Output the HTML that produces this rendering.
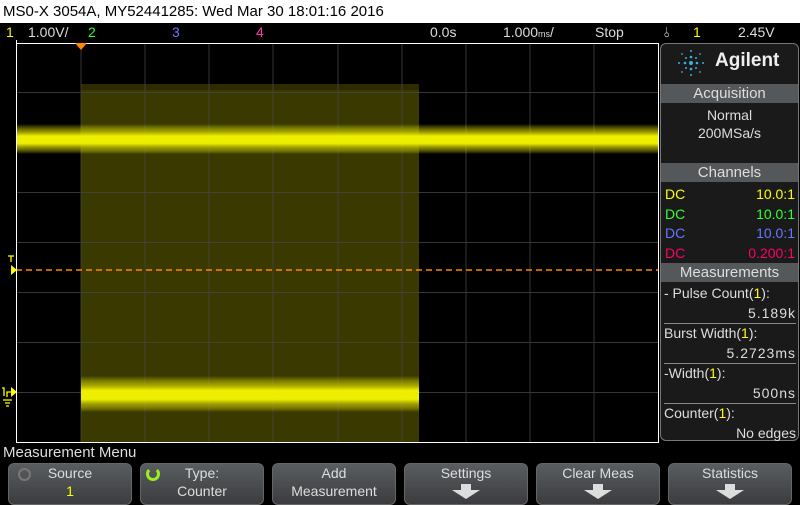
<!DOCTYPE html><html><head><style>
*{margin:0;padding:0;box-sizing:border-box}
body{width:800px;height:503px;background:#000;overflow:hidden;position:relative;font-family:"Liberation Sans Narrow","Liberation Sans",sans-serif;color:#ddd}
.a{position:absolute}
.t{font-size:14px;white-space:nowrap}
.btn{position:absolute;top:463px;width:124px;height:42px;border-radius:6px;background:linear-gradient(#5a5d60,#3a3c3e);border:1px solid #666;color:#ddd;text-align:center;font-size:14px;line-height:18px}
.hd{position:absolute;left:661px;width:137px;height:19px;background:#55585a;color:#ddd;text-align:center;font-size:15px;line-height:19px}
.arr{width:0;height:0;margin:1px auto 0;border-left:14px solid transparent;border-right:14px solid transparent;border-top:9px solid #ddd;position:relative}
.arr:before{content:"";position:absolute;left:-5px;top:-15px;width:10px;height:7px;background:#ddd}
</style></head><body>
<div class="a" style="left:0;top:0;width:800px;height:23px;background:#fff"></div>
<div class="a t" style="left:3px;top:3px;color:#000;font-size:15px">MS0-X 3054A, MY52441285: Wed Mar 30 18:01:16 2016</div>
<div class="a t" style="left:6px;top:24px;color:#ff0">1</div>
<div class="a t" style="left:28px;top:24px">1.00V/</div>
<div class="a t" style="left:88px;top:24px;color:#3f3">2</div>
<div class="a t" style="left:172px;top:24px;color:#67f">3</div>
<div class="a t" style="left:256px;top:24px;color:#f3a">4</div>
<div class="a t" style="left:430px;top:24px">0.0s</div>
<div class="a t" style="left:503px;top:24px">1.000<span style="font-size:9px">ms</span>/</div>
<div class="a t" style="left:595px;top:24px">Stop</div>
<div class="a t" style="left:664px;top:24px">⫰</div>
<div class="a t" style="left:693px;top:24px;color:#ff0">1</div>
<div class="a t" style="left:738px;top:24px">2.45V</div>
<svg class="a" style="left:0;top:40px" width="660" height="405">
<defs>
<linearGradient id="hb" x1="0" y1="0" x2="0" y2="1"><stop offset="0" stop-color="#ff0" stop-opacity="0"/><stop offset=".25" stop-color="#cc0" stop-opacity=".7"/><stop offset=".4" stop-color="#ee0"/><stop offset=".65" stop-color="#ee0"/><stop offset=".8" stop-color="#bb0" stop-opacity=".7"/><stop offset="1" stop-color="#ff0" stop-opacity="0"/></linearGradient>
</defs>
<rect x="81" y="48" width="338" height="354" fill="#3a3a00"/>
<rect x="81" y="44" width="338" height="6" fill="#2c2c00"/>
<g stroke="#444" stroke-width="1" opacity=".8">
<line x1="81" y1="3" x2="81" y2="402"/><line x1="145" y1="3" x2="145" y2="402"/><line x1="209" y1="3" x2="209" y2="402"/><line x1="273" y1="3" x2="273" y2="402"/><line x1="338" y1="3" x2="338" y2="402"/><line x1="402" y1="3" x2="402" y2="402"/><line x1="466" y1="3" x2="466" y2="402"/><line x1="530" y1="3" x2="530" y2="402"/><line x1="594" y1="3" x2="594" y2="402"/>
<line x1="16" y1="52.5" x2="658" y2="52.5"/><line x1="16" y1="102.5" x2="658" y2="102.5"/><line x1="16" y1="152.5" x2="658" y2="152.5"/><line x1="16" y1="202.5" x2="658" y2="202.5"/><line x1="16" y1="252.5" x2="658" y2="252.5"/><line x1="16" y1="302.5" x2="658" y2="302.5"/><line x1="16" y1="352.5" x2="658" y2="352.5"/>
</g>
<rect x="16" y="84" width="642" height="30" fill="url(#hb)"/>
<rect x="81" y="336" width="338" height="36" fill="url(#hb)"/>
<line x1="16" y1="230" x2="658" y2="230" stroke="#f80" stroke-width="1.5" stroke-dasharray="6,4"/>
<line x1="16.5" y1="0" x2="16.5" y2="403" stroke="#fff"/>
<line x1="16" y1="402.5" x2="659" y2="402.5" stroke="#fff"/>
<line x1="16" y1="3.5" x2="659" y2="3.5" stroke="#fff"/>
<line x1="658.5" y1="3" x2="658.5" y2="403" stroke="#fff"/>
<polygon points="75,3 87,3 81,10" fill="#f80"/>
<polygon points="11,225 17,230 11,235" fill="#ff0"/>
<path d="M8 216h6M11 216v6" stroke="#ff0" stroke-width="1.3" fill="none"/>
<polygon points="11,347 17,352 11,357" fill="#ff0"/>
<path d="M2 348h2v8M7 357v-5h4M3 360h9M5 363h5M6 366h3" stroke="#ff0" stroke-width="1.3" fill="none"/>
</svg>
<div class="a" style="left:660px;top:43px;width:139px;height:398px;border:1px solid #777;border-radius:6px;background:#1a1a1a"></div>
<svg class="a" style="left:676px;top:48px" width="30" height="30"><g fill="#3ab0e0">
<circle cx="15" cy="15" r="2"/><circle cx="15" cy="9" r="1.3"/><circle cx="15" cy="21" r="1.3"/><circle cx="9" cy="15" r="1.3"/><circle cx="21" cy="15" r="1.3"/><circle cx="15" cy="3" r="1"/><circle cx="15" cy="27" r="1"/><circle cx="3" cy="15" r="1"/><circle cx="27" cy="15" r="1"/><circle cx="10" cy="10" r="1"/><circle cx="20" cy="10" r="1"/><circle cx="10" cy="20" r="1"/><circle cx="20" cy="20" r="1"/><circle cx="6" cy="6" r=".9"/><circle cx="24" cy="6" r=".9"/><circle cx="6" cy="24" r=".9"/><circle cx="24" cy="24" r=".9"/></g></svg>
<div class="a" style="left:715px;top:50px;font-family:'Liberation Sans',sans-serif;font-weight:bold;font-size:19px;color:#eee">Agilent</div>
<div class="hd" style="top:84px">Acquisition</div>
<div class="a t" style="left:661px;top:106px;width:137px;text-align:center;font-size:14px;line-height:18px">Normal<br>200MSa/s</div>
<div class="hd" style="top:163px">Channels</div>
<div class="a t" style="left:665px;top:185px;line-height:19.5px;font-size:14px"><span style="color:#ff0">DC</span><br><span style="color:#3f3">DC</span><br><span style="color:#67f">DC</span><br><span style="color:#f06">DC</span></div>
<div class="a t" style="left:700px;top:185px;width:95px;text-align:right;line-height:19.5px;font-size:14px"><span style="color:#ff0">10.0:1</span><br><span style="color:#3f3">10.0:1</span><br><span style="color:#67f">10.0:1</span><br><span style="color:#f06">0.200:1</span></div>
<div class="hd" style="top:263px">Measurements</div>
<div class="a" style="left:664px;top:284px;width:132px;font-size:14px;line-height:19.5px">
<div>- Pulse Count(<span style="color:#ff0">1</span>):</div><div style="text-align:right;border-bottom:1px solid #888;letter-spacing:1px">5.189k</div>
<div>Burst Width(<span style="color:#ff0">1</span>):</div><div style="text-align:right;border-bottom:1px solid #888;letter-spacing:1px">5.2723ms</div>
<div>-Width(<span style="color:#ff0">1</span>):</div><div style="text-align:right;border-bottom:1px solid #888;letter-spacing:1px">500ns</div>
<div>Counter(<span style="color:#ff0">1</span>):</div><div style="text-align:right">No edges</div></div>
<div class="a t" style="left:3px;top:444px;font-size:15px">Measurement Menu</div>
<div class="btn" style="left:8px">Source<br><span style="color:#ff0">1</span><span class="a" style="left:9px;top:4px;width:13px;height:13px;border:2px solid #777;border-radius:50%"></span></div>
<div class="btn" style="left:140px">Type:<br>Counter<span class="a" style="left:5px;top:3px;width:14px;height:14px;border:3px solid #9e2;border-radius:50%;border-top-color:transparent"></span></div>
<div class="btn" style="left:272px">Add<br>Measurement</div>
<div class="btn" style="left:404px">Settings<div class="arr" style="margin-top:8px"></div></div>
<div class="btn" style="left:536px">Clear Meas<div class="arr" style="margin-top:8px"></div></div>
<div class="btn" style="left:668px">Statistics<div class="arr" style="margin-top:8px"></div></div>
</body></html>
